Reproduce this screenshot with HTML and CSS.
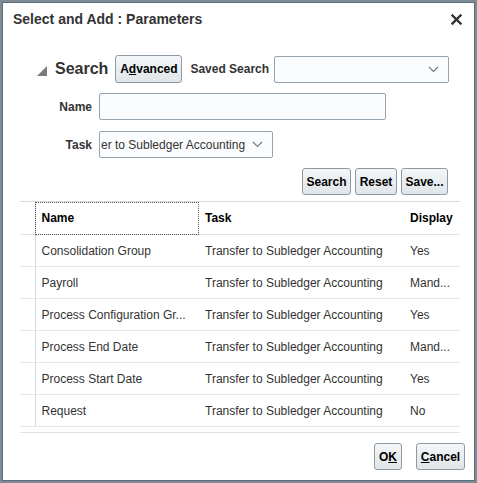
FILE: index.html
```html
<!DOCTYPE html>
<html lang="en">
<head>
  <meta charset="UTF-8">
  <title>Select and Add : Parameters</title>
  <link rel="stylesheet" href="styles.css">
</head>
<body>

  <div class="dialog">
    <div class="dialog-head">
      <span class="dialog-title">Select and Add : Parameters</span>
      <button class="close-btn" title="Close">
        <svg width="11" height="11" viewBox="0 0 11 11"><path d="M1.5 1.5 L9.5 9.5 M9.5 1.5 L1.5 9.5" stroke="#333" stroke-width="2.4" stroke-linecap="square"/></svg>
      </button>
    </div>

    <div class="search-row">
      <span class="disclosure"></span>
      <span class="search-title">Search</span>
      <button class="btn adv-btn">A<u>d</u>vanced</button>
      <span class="label saved-label">Saved Search</span>
      <div class="select saved-select">
        <svg class="chevron" width="11" height="7" viewBox="0 0 11 7"><path d="M1 1 L5.5 5.5 L10 1" fill="none" stroke="#6d7a86" stroke-width="1.1"/></svg>
      </div>
    </div>

    <div class="form-grid">
      <span class="label">Name</span>
      <div class="input name-input"></div>
      <span class="label">Task</span>
      <div class="select task-select">
        <span class="task-value">er to Subledger Accounting</span>
        <svg class="chevron" width="11" height="7" viewBox="0 0 11 7"><path d="M1 1 L5.5 5.5 L10 1" fill="none" stroke="#6d7a86" stroke-width="1.1"/></svg>
      </div>
    </div>

    <div class="btn-row">
      <button class="btn w-search">Search</button>
      <button class="btn w-reset">Reset</button>
      <button class="btn w-save">Save...</button>
    </div>

    <div class="results">
      <table class="grid">
        <colgroup>
          <col class="c-sel"><col class="c-name"><col class="c-task"><col class="c-disp">
        </colgroup>
        <thead>
          <tr>
            <th class="sel"></th>
            <th class="focused">Name</th>
            <th>Task</th>
            <th>Display</th>
          </tr>
        </thead>
        <tbody>
          <tr><td class="sel"></td><td>Consolidation Group</td><td>Transfer to Subledger Accounting</td><td>Yes</td></tr>
          <tr><td class="sel"></td><td>Payroll</td><td>Transfer to Subledger Accounting</td><td>Mand...</td></tr>
          <tr><td class="sel"></td><td>Process Configuration Gr...</td><td>Transfer to Subledger Accounting</td><td>Yes</td></tr>
          <tr><td class="sel"></td><td>Process End Date</td><td>Transfer to Subledger Accounting</td><td>Mand...</td></tr>
          <tr><td class="sel"></td><td>Process Start Date</td><td>Transfer to Subledger Accounting</td><td>Yes</td></tr>
          <tr><td class="sel"></td><td>Request</td><td>Transfer to Subledger Accounting</td><td>No</td></tr>
        </tbody>
      </table>
    </div>

    <div class="dialog-foot">
      <button class="btn ok-btn">O<u>K</u></button>
      <button class="btn cancel-btn"><u>C</u>ancel</button>
    </div>
  </div>

</body>
</html>
```

FILE: styles.css
```css
body {
  margin: 0;
  background: #7d8b96;
  font-family: 'Liberation Sans', Arial, sans-serif;
  font-size: 12px;
  color: #333;
}

.dialog {
  box-sizing: border-box;
  width: 471px;
  height: 477px;
  margin: 3px;
  background: #fff;
  outline: 1px solid #5f6d78;
}

.dialog-head {
  display: flex;
  justify-content: space-between;
  align-items: center;
  padding: 8px 12px 0 10px;
  height: 16px;
}

.dialog-title {
  font-size: 14px;
  font-weight: bold;
  line-height: 16px;
  color: #333;
}

.close-btn {
  border: 0;
  background: none;
  padding: 0;
  width: 11px;
  height: 11px;
  display: flex;
}

.btn {
  box-sizing: border-box;
  height: 27px;
  padding: 0;
  font-family: inherit;
  font-size: 12px;
  font-weight: bold;
  color: #000;
  background: linear-gradient(#f4f6f8, #e0e5e9);
  border: 1px solid #8d9aa5;
  border-radius: 3px;
  white-space: nowrap;
}

.label {
  font-weight: bold;
  color: #333;
}

.select, .input {
  box-sizing: border-box;
  height: 27px;
  background: #fbfcfd;
  border: 1px solid #97a4af;
  border-radius: 2px;
}

.select {
  display: flex;
  align-items: center;
  justify-content: flex-end;
  padding-right: 9px;
}

/* search header row */
.search-row {
  display: flex;
  align-items: center;
  height: 28px;
  margin-top: 28px;
  padding-left: 34px;
}

.disclosure {
  width: 0;
  height: 0;
  border-style: solid;
  border-width: 0 0 10px 10px;
  border-color: transparent transparent #7b7b7b transparent;
  margin-top: 3px;
}

.search-title {
  margin-left: 8px;
  font-size: 16px;
  font-weight: bold;
  color: #333;
}

.adv-btn {
  height: 28px;
  width: 67px;
  margin-left: 7px;
}

.saved-label {
  margin-left: 8px;
}

.saved-select {
  width: 175px;
  margin-left: 5px;
}

/* name / task fields */
.form-grid {
  display: grid;
  grid-template-columns: 89px auto;
  grid-auto-rows: 27px;
  column-gap: 7px;
  row-gap: 11px;
  align-items: center;
  justify-items: start;
  margin-top: 10px;
}

.form-grid .label {
  justify-self: end;
}

.name-input {
  width: 287px;
}

.task-select {
  width: 174px;
  padding-left: 1px;
}

.task-value {
  flex: 1;
  overflow: hidden;
  white-space: nowrap;
  color: #333;
}

.btn-row {
  display: flex;
  justify-content: flex-end;
  gap: 4px;
  margin-top: 10px;
  padding-right: 26px;
}

.w-search { width: 49px; }
.w-reset { width: 42px; }
.w-save { width: 47px; }

/* results table */
.results {
  width: 440px;
  margin: 6px 0 0 17px;
  border-top: 1px solid #d3dbe2;
  border-bottom: 1px solid #dfe4e8;
  padding-bottom: 5px;
}

.grid {
  width: 440px;
  border-collapse: collapse;
  table-layout: fixed;
}

.c-sel { width: 15px; }
.c-name { width: 164px; }
.c-task { width: 205px; }
.c-disp { width: 56px; }

.grid th,
.grid td {
  padding: 0 6px;
  text-align: left;
  white-space: nowrap;
  overflow: hidden;
}

.grid th {
  height: 32px;
  font-weight: bold;
  color: #000;
  border-bottom: 1px solid #dfe4e8;
}

.grid td {
  height: 31px;
  border-bottom: 1px solid #e3e7eb;
  color: #333;
}

.grid .sel {
  padding: 0;
  border-right: 1px solid #d3dbe2;
}

.grid th.focused {
  outline: 1px dotted #555;
  outline-offset: -1px;
}

.dialog-foot {
  display: flex;
  justify-content: flex-end;
  gap: 14px;
  margin-top: 10px;
  padding-right: 9px;
}

.ok-btn { width: 28px; }
.cancel-btn { width: 49px; }
```
